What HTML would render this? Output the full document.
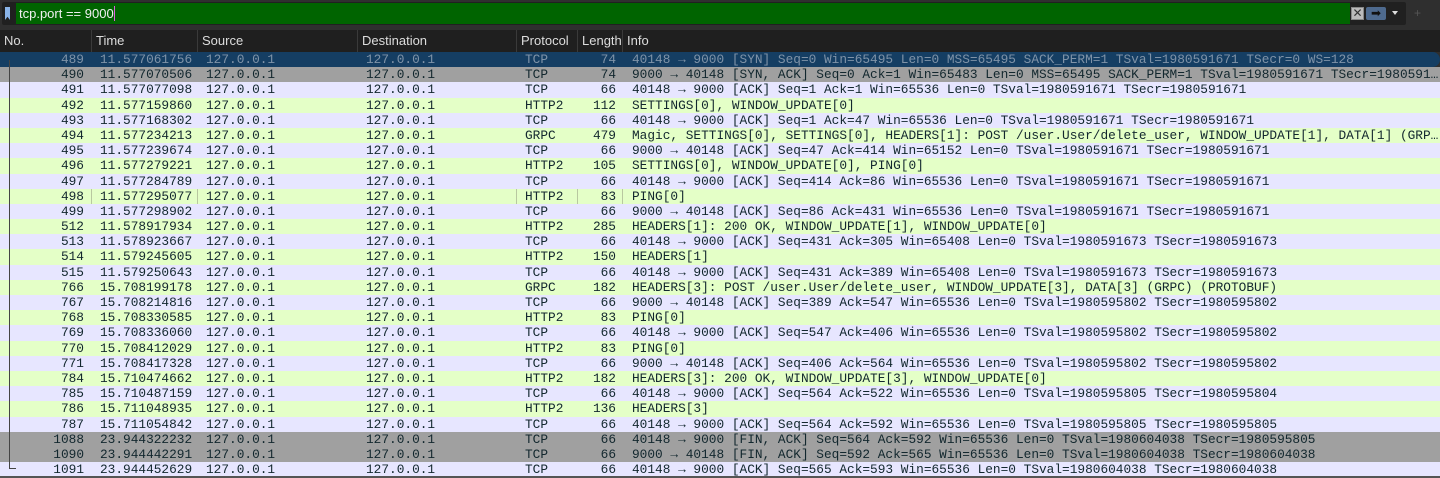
<!DOCTYPE html><html><head><meta charset="utf-8"><style>
*{margin:0;padding:0;box-sizing:border-box}
body{width:1440px;height:478px;background:#2f2f2f;overflow:hidden;position:relative;font-family:"Liberation Sans",sans-serif}
#fb{position:absolute;left:2px;top:2px;width:1404px;height:23px;background:#202020;border-radius:2px}
#fbg{position:absolute;left:16px;top:3px;width:1334px;height:21px;background:#006400;color:#f0f0f0;font-size:13px;line-height:21px;padding-left:3px}
#fbg span{border-right:1px solid #e060e0}
#hdr{position:absolute;left:0;top:30px;width:1440px;height:22px;background:#1f1f1f;color:#ddd;font-size:13px;line-height:22px}
#hdr div{position:absolute;top:0;height:22px;border-left:1px solid #3a3a3a;padding-left:4px}
.r{position:absolute;left:0;width:1440px;height:15.3px;font-family:"Liberation Mono",monospace;font-size:12.8px;line-height:15px;color:#12272e;white-space:nowrap;overflow:hidden}
.r span{position:absolute;top:0}
.t{background:#e7e6ff}.g{background:#e4ffc7}.y{background:#a0a0a0}
.s{background:#153e63;color:#7f93a8}
</style></head><body>
<div id="fb"></div>
<div style="position:absolute;left:5px;top:7px;width:5px;height:13px;background:#8ab4e8;clip-path:polygon(0 0,100% 0,100% 100%,50% 75%,0 100%)"></div>
<div id="fbg"><span>tcp.port == 9000</span></div>
<div style="position:absolute;left:1351px;top:7px;width:13px;height:13px;background:#bbb;border:1px solid #888;color:#333;font-size:12px;line-height:11px;text-align:center">✕</div>
<div style="position:absolute;left:1366px;top:7px;width:20px;height:13px;background:#4e6a8e;border-radius:2px;color:#111;font-size:12px;line-height:12px;text-align:center">➡</div>
<div style="position:absolute;left:1392px;top:11px;width:0;height:0;border-left:3px solid transparent;border-right:3px solid transparent;border-top:4px solid #ddd"></div>
<div style="position:absolute;left:1414px;top:6px;color:#555;font-size:12px">+</div>
<div id="hdr">
<div style="left:0;border:none">No.</div><div style="left:91px">Time</div><div style="left:197px">Source</div><div style="left:357px">Destination</div><div style="left:516px">Protocol</div><div style="left:577px">Length</div><div style="left:622px">Info</div>
</div>
<div id="rows"></div>
<div style="position:absolute;left:9px;top:60px;width:1px;height:409px;background:#444"></div>
<div style="position:absolute;left:9px;top:468px;width:7px;height:1px;background:#444"></div>
<div style="position:absolute;left:0;top:476px;width:1440px;height:2px;background:#555"></div>
<script>
var d=[
["s",489,"11.577061756","TCP",74,"40148 → 9000 [SYN] Seq=0 Win=65495 Len=0 MSS=65495 SACK_PERM=1 TSval=1980591671 TSecr=0 WS=128"],
["y",490,"11.577070506","TCP",74,"9000 → 40148 [SYN, ACK] Seq=0 Ack=1 Win=65483 Len=0 MSS=65495 SACK_PERM=1 TSval=1980591671 TSecr=1980591…"],
["t",491,"11.577077098","TCP",66,"40148 → 9000 [ACK] Seq=1 Ack=1 Win=65536 Len=0 TSval=1980591671 TSecr=1980591671"],
["g",492,"11.577159860","HTTP2",112,"SETTINGS[0], WINDOW_UPDATE[0]"],
["t",493,"11.577168302","TCP",66,"40148 → 9000 [ACK] Seq=1 Ack=47 Win=65536 Len=0 TSval=1980591671 TSecr=1980591671"],
["g",494,"11.577234213","GRPC",479,"Magic, SETTINGS[0], SETTINGS[0], HEADERS[1]: POST /user.User/delete_user, WINDOW_UPDATE[1], DATA[1] (GRP…"],
["t",495,"11.577239674","TCP",66,"9000 → 40148 [ACK] Seq=47 Ack=414 Win=65152 Len=0 TSval=1980591671 TSecr=1980591671"],
["g",496,"11.577279221","HTTP2",105,"SETTINGS[0], WINDOW_UPDATE[0], PING[0]"],
["t",497,"11.577284789","TCP",66,"40148 → 9000 [ACK] Seq=414 Ack=86 Win=65536 Len=0 TSval=1980591671 TSecr=1980591671"],
["g h",498,"11.577295077","HTTP2",83,"PING[0]"],
["t",499,"11.577298902","TCP",66,"9000 → 40148 [ACK] Seq=86 Ack=431 Win=65536 Len=0 TSval=1980591671 TSecr=1980591671"],
["g",512,"11.578917934","HTTP2",285,"HEADERS[1]: 200 OK, WINDOW_UPDATE[1], WINDOW_UPDATE[0]"],
["t",513,"11.578923667","TCP",66,"40148 → 9000 [ACK] Seq=431 Ack=305 Win=65408 Len=0 TSval=1980591673 TSecr=1980591673"],
["g",514,"11.579245605","HTTP2",150,"HEADERS[1]"],
["t",515,"11.579250643","TCP",66,"40148 → 9000 [ACK] Seq=431 Ack=389 Win=65408 Len=0 TSval=1980591673 TSecr=1980591673"],
["g",766,"15.708199178","GRPC",182,"HEADERS[3]: POST /user.User/delete_user, WINDOW_UPDATE[3], DATA[3] (GRPC) (PROTOBUF)"],
["t",767,"15.708214816","TCP",66,"9000 → 40148 [ACK] Seq=389 Ack=547 Win=65536 Len=0 TSval=1980595802 TSecr=1980595802"],
["g",768,"15.708330585","HTTP2",83,"PING[0]"],
["t",769,"15.708336060","TCP",66,"40148 → 9000 [ACK] Seq=547 Ack=406 Win=65536 Len=0 TSval=1980595802 TSecr=1980595802"],
["g",770,"15.708412029","HTTP2",83,"PING[0]"],
["t",771,"15.708417328","TCP",66,"9000 → 40148 [ACK] Seq=406 Ack=564 Win=65536 Len=0 TSval=1980595802 TSecr=1980595802"],
["g",784,"15.710474662","HTTP2",182,"HEADERS[3]: 200 OK, WINDOW_UPDATE[3], WINDOW_UPDATE[0]"],
["t",785,"15.710487159","TCP",66,"40148 → 9000 [ACK] Seq=564 Ack=522 Win=65536 Len=0 TSval=1980595805 TSecr=1980595804"],
["g",786,"15.711048935","HTTP2",136,"HEADERS[3]"],
["t",787,"15.711054842","TCP",66,"40148 → 9000 [ACK] Seq=564 Ack=592 Win=65536 Len=0 TSval=1980595805 TSecr=1980595805"],
["y",1088,"23.944322232","TCP",66,"40148 → 9000 [FIN, ACK] Seq=564 Ack=592 Win=65536 Len=0 TSval=1980604038 TSecr=1980595805"],
["y",1090,"23.944442291","TCP",66,"9000 → 40148 [FIN, ACK] Seq=592 Ack=565 Win=65536 Len=0 TSval=1980604038 TSecr=1980604038"],
["t",1091,"23.944452629","TCP",66,"40148 → 9000 [ACK] Seq=565 Ack=593 Win=65536 Len=0 TSval=1980604038 TSecr=1980604038"]];
var h="";d.forEach(function(r,i){
var sep=r[0].indexOf("h")>=0?'<span style="left:91px;width:1px;height:15px;background:#b8c8a0"></span><span style="left:197px;width:1px;height:15px;background:#b8c8a0"></span><span style="left:516px;width:1px;height:15px;background:#b8c8a0"></span><span style="left:577px;width:1px;height:15px;background:#b8c8a0"></span><span style="left:622px;width:1px;height:15px;background:#b8c8a0"></span>':"";
h+='<div class="r '+r[0]+'" style="top:'+(52+i*15.19).toFixed(2)+'px'+(i==0?';border-radius:0 8px 8px 0':'')+'">'+sep+'<span style="right:1356px">'+r[1]+'</span><span style="left:100px">'+r[2]+'</span><span style="left:206px">127.0.0.1</span><span style="left:366px">127.0.0.1</span><span style="left:525px">'+r[3]+'</span><span style="right:824px">'+r[4]+'</span><span style="left:632px">'+r[5]+'</span></div>';});
document.getElementById("rows").innerHTML=h;
</script>
</body></html>
